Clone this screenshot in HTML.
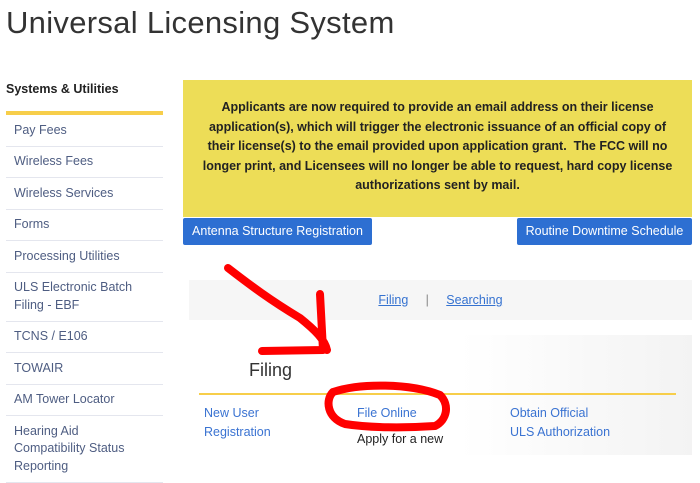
<!DOCTYPE html>
<html><head><style>
body{margin:0;width:700px;height:455px;overflow:hidden;background:#fff;font-family:"Liberation Sans",sans-serif;position:relative}
.a{position:absolute}
h1{position:absolute;left:6px;top:5px;margin:0;font-weight:normal;font-size:31px;color:#333;letter-spacing:0.3px}
.side{left:6px;top:80px;width:157px}
.side .hd{font-weight:bold;font-size:12.5px;color:#222;height:31px;border-bottom:4px solid #f7ce4a;line-height:19px}
.side .it{font-size:12.5px;color:#4e5d82;padding:6.5px 14px 6.5px 8px;border-bottom:1px solid #e4e6ee;line-height:17.5px}
.yb{left:183px;top:80px;width:509px;height:137px;background:#eddd57;font-weight:bold;font-size:12.5px;color:#222;text-align:center;line-height:19.5px;box-sizing:border-box;padding:18px 18px}
.btn{background:#2d6fd2;color:#fff;font-size:12.5px;top:218px;height:27px;line-height:27px;border-radius:2px;text-align:center}
.nav{left:189px;top:280px;width:503px;height:40px;background:#f6f6f6;font-size:12.5px;color:#2f6fd3;text-align:center;line-height:40px}
.nav u{color:#3572d0}
.lk{color:#3a73d2;font-size:12.5px;line-height:19px}
</style></head><body>
<h1>Universal Licensing System</h1>
<div class="a side">
<div class="hd">Systems &amp; Utilities</div>
<div class="it">Pay Fees</div>
<div class="it">Wireless Fees</div>
<div class="it">Wireless Services</div>
<div class="it">Forms</div>
<div class="it">Processing Utilities</div>
<div class="it">ULS Electronic Batch Filing - EBF</div>
<div class="it">TCNS / E106</div>
<div class="it">TOWAIR</div>
<div class="it">AM Tower Locator</div>
<div class="it">Hearing Aid Compatibility Status Reporting</div>
</div>
<div class="a yb">Applicants are now required to provide an email address on their license application(s), which will trigger the electronic issuance of an official copy of their license(s) to the email provided upon application grant.&nbsp; The FCC will no longer print, and Licensees will no longer be able to request, hard copy license authorizations sent by mail.</div>
<div class="a btn" style="left:183px;width:189px">Antenna Structure Registration</div>
<div class="a btn" style="left:517px;width:175px">Routine Downtime Schedule</div>
<div class="a nav"><u>Filing</u>&nbsp;&nbsp;&nbsp;&nbsp;&nbsp;<span style="color:#888">|</span>&nbsp;&nbsp;&nbsp;&nbsp;&nbsp;<u>Searching</u></div>
<div class="a" style="left:460px;top:335px;width:232px;height:120px;background:linear-gradient(90deg,#fff,#f3f3f3)"></div>
<div class="a" style="left:249px;top:360px;font-size:18px;color:#333">Filing</div>
<div class="a" style="left:199px;top:393px;width:477px;height:2px;background:#f7ce4a"></div>
<div class="a lk" style="left:204px;top:404px">New User<br>Registration</div>
<div class="a lk" style="left:357px;top:404px">File Online</div>
<div class="a" style="left:357px;top:432px;font-size:12.5px;color:#222">Apply for a new</div>
<div class="a lk" style="left:510px;top:404px">Obtain Official<br>ULS Authorization</div>
<svg class="a" style="left:0;top:0" width="700" height="455">
<g fill="none" stroke="#f00" stroke-width="8" stroke-linecap="round" stroke-linejoin="round">
<path d="M228 268 C250 285 270 300 300 318 C315 330 325 340 327 350"/>
<path d="M320 294 L323 350 L262 351"/>
<path d="M333 392 C360 383 410 383 440 395 C450 405 447 420 435 426 C405 428 370 428 345 424 C327 418 325 400 333 392"/>
</g></svg>
</body></html>
